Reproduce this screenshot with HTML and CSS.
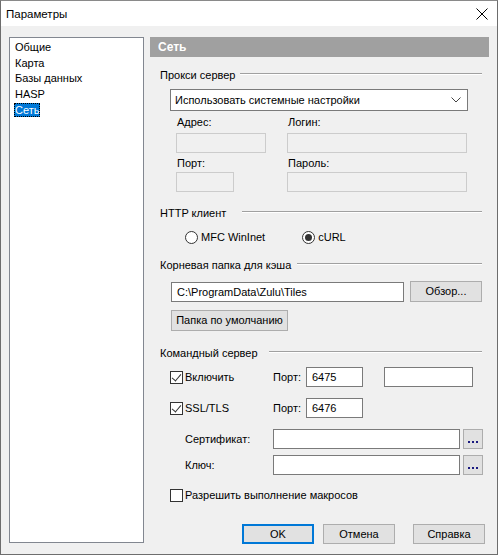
FILE: index.html
```html
<!DOCTYPE html>
<html>
<head>
<meta charset="utf-8">
<link rel="stylesheet" href="styles.css">
</head>
<body>
<div class="window">
  <div class="titlebar">
    <span class="title">Параметры</span>
    <svg class="close" width="12" height="12" viewBox="0 0 12 12"><path d="M0.5 0.5 L11.5 11.5 M11.5 0.5 L0.5 11.5" stroke="#000" stroke-width="1"/></svg>
  </div>
  <div class="body">
    <div class="listbox">
      <div class="item">Общие</div>
      <div class="item">Карта</div>
      <div class="item">Базы данных</div>
      <div class="item">HASP</div>
      <div class="item"><span class="selected">Сеть</span></div>
    </div>
    <div class="panel">
      <div class="header">Сеть</div>

      <div class="group g-proxy"><span>Прокси сервер</span><i class="line"></i></div>
      <div class="combo"><span>Использовать системные настройки</span>
        <svg width="10" height="6" viewBox="0 0 10 6"><path d="M0.5 0.5 L5 5 L9.5 0.5" fill="none" stroke="#444" stroke-width="1"/></svg>
      </div>
      <div class="fields">
        <div class="lbl">Адрес:</div><div class="lbl">Логин:</div>
        <div class="dis d1 w-addr"></div><div class="dis d1 w-wide"></div>
        <div class="lbl l2">Порт:</div><div class="lbl l2">Пароль:</div>
        <div class="dis w-port"></div><div class="dis w-wide"></div>
      </div>

      <div class="group g-http"><span>HTTP клиент</span><i class="line"></i></div>
      <div class="radios">
        <label class="radio r1"><i class="circle"></i>MFC WinInet</label>
        <label class="radio r2"><i class="circle on"></i>cURL</label>
      </div>

      <div class="group g-cache"><span>Корневая папка для кэша</span><i class="line"></i></div>
      <div class="pathrow">
        <div class="input w-path">C:\ProgramData\Zulu\Tiles</div>
        <div class="btn w-browse">Обзор...</div>
      </div>
      <div class="btn w-default">Папка по умолчанию</div>

      <div class="group g-cmd"><span>Командный сервер</span><i class="line"></i></div>
      <div class="row r-enable">
        <label class="check"><i class="box on"></i>Включить</label>
        <span class="portlbl">Порт:</span>
        <div class="input w-portv">6475</div>
        <div class="input w-extra"></div>
      </div>
      <div class="row r-ssl">
        <label class="check"><i class="box on"></i>SSL/TLS</label>
        <span class="portlbl">Порт:</span>
        <div class="input w-portv">6476</div>
      </div>
      <div class="row r-cert">
        <span class="flbl">Сертификат:</span>
        <div class="input w-file"></div>
        <div class="dots"><i></i><i></i><i></i></div>
      </div>
      <div class="row r-key">
        <span class="flbl">Ключ:</span>
        <div class="input w-file"></div>
        <div class="dots"><i></i><i></i><i></i></div>
      </div>
      <div class="row r-macro">
        <label class="check"><i class="box"></i>Разрешить выполнение макросов</label>
      </div>

      <div class="buttons">
        <div class="btn dlg default">OK</div>
        <div class="btn dlg b-cancel">Отмена</div>
        <div class="btn dlg b-help">Справка</div>
      </div>
    </div>
  </div>
</div>
</body>
</html>
```
FILE: styles.css
```css
html, body { margin: 0; padding: 0; background: #ffffff; }
body { font-family: "Liberation Sans", Arial, sans-serif; font-size: 11px; color: #000; }

.window {
  width: 498px; height: 555px; box-sizing: border-box;
  border: 1px solid #6d6d6d; border-top-color: #8a8a8a;
  background: #f0f0f0; display: flex; flex-direction: column;
}
.titlebar {
  height: 25px; background: #fff; display: flex; align-items: center;
  justify-content: space-between; padding: 0 9px 0 5px; flex: none;
}
.title { font-size: 11.5px; }
.close { display: block; }

.body { display: flex; padding: 11px 0 0 8px; flex: 1; }
.listbox {
  width: 135px; height: 506px; box-sizing: border-box; background: #fff;
  border: 1px solid #828790; padding: 2px 0 0 5px; flex: none;
}
.item { height: 15.7px; line-height: 15.7px; white-space: nowrap; }
.selected {
  background: #0078d7; color: #fff; outline: 1px dotted #000; outline-offset: -1px;
  padding: 0 1px; margin-left: -1px; display: inline-block; line-height: 14px;
}

.panel { margin-left: 6px; width: 339px; display: flex; flex-direction: column; }
.header {
  height: 20px; background: #a0a0a0; color: #fff; font-weight: bold; font-size: 12px;
  line-height: 20px; padding-left: 8px;
}

.group { display: flex; align-items: center; height: 14px; padding-left: 10px; margin-right: 7px; white-space: nowrap; }
.group .line { flex: 1; height: 0; border-top: 1px solid #a0a0a0; border-bottom: 1px solid #fff; margin-top: -3px; }
.g-proxy { margin-top: 11px; }
.g-proxy .line { margin-left: 5px; }
.g-http { margin-top: 14px; }
.g-http .line { margin-left: 16px; }
.g-cache { margin-top: 14px; }
.g-cache .line { margin-left: 6px; }
.g-cmd { margin-top: 15px; }
.g-cmd .line { margin-left: 11px; }

.combo {
  margin: 7px 0 0 20px; width: 298px; height: 22px; box-sizing: border-box;
  border: 1px solid #7a7a7a; background: #fff; display: flex; align-items: center;
  justify-content: space-between; padding: 0 6px 0 4px;
}

.fields {
  display: grid; grid-template-columns: 111px 180px; margin-left: 26px;
  grid-template-rows: 14px 24px 19px 20px; margin-top: 4px;
}
.lbl { padding-left: 1px; line-height: 14px; align-self: start; }
.dis { height: 20px; box-sizing: border-box; background: #f0f0f0; border: 1px solid #cccccc; }
.d1 { margin-top: 4px; }
.l2 { margin-top: 3px; }
.w-addr { width: 90px; }
.w-port { width: 58px; }
.w-wide { width: 180px; }

.radios { display: flex; height: 14px; margin-top: 10px; align-items: center; }
.radio { display: flex; align-items: center; white-space: nowrap; }
.radio .circle {
  width: 13px; height: 13px; box-sizing: border-box; border: 1px solid #333; border-radius: 50%;
  background: #fff; margin-right: 3px; position: relative; display: inline-block;
}
.radio .circle.on::after {
  content: ""; position: absolute; left: 2px; top: 2px; width: 7px; height: 7px; border-radius: 50%; background: #333;
}
.r1 { margin-left: 35px; }
.r2 { margin-left: 37px; }

.pathrow { display: flex; margin: 9px 0 0 21px; align-items: flex-start; }
.input {
  height: 20px; box-sizing: border-box; background: #fff; border: 1px solid #7a7a7a;
  padding-left: 5px; line-height: 18px; white-space: nowrap;
}
.w-path { width: 233px; margin-top: 1px; }
.btn {
  height: 21px; box-sizing: border-box; background: #e1e1e1; border: 1px solid #adadad;
  text-align: center; line-height: 19px; white-space: nowrap;
}
.w-browse { width: 72px; margin-left: 6px; }
.w-default { width: 117px; margin: 8px 0 0 21px; }

.row { display: flex; align-items: center; height: 20px; margin-left: 20px; }
.check { display: flex; align-items: center; white-space: nowrap; }
.box {
  width: 13px; height: 13px; box-sizing: border-box; border: 1px solid #333; background: #fff;
  margin-right: 2px; position: relative; display: inline-block;
}
.box.on::after {
  content: ""; position: absolute; left: 3px; top: 0px; width: 4px; height: 8px;
  border: solid #333; border-width: 0 1.3px 1.3px 0; transform: rotate(40deg);
}
.r-enable { margin-top: 7px; }
.r-enable .check { width: 103px; }
.r-ssl .check { width: 103px; }
.portlbl { width: 33px; }
.w-portv { width: 57px; }
.w-extra { width: 89px; margin-left: 21px; margin-top: -1px; }
.r-ssl { margin-top: 11px; }
.r-cert { margin-top: 11px; }
.r-key { margin-top: 6px; }
.flbl { width: 88px; padding-left: 15px; }
.w-file { width: 187px; }
.dots {
  width: 20px; height: 20px; box-sizing: border-box; margin-left: 3px; background: #e1e1e1;
  border: 1px solid #adadad; display: flex; justify-content: center; align-items: flex-end;
  gap: 2px; padding-bottom: 5px;
}
.dots i { width: 2px; height: 2px; background: #1a1a80; display: block; }
.r-macro { margin-top: 13px; height: 14px; }

.buttons { display: flex; margin-top: 22px; margin-left: 92px; }
.dlg { width: 72px; height: 20px; line-height: 18px; }
.default { border: 2px solid #0078d7; line-height: 16px; }
.b-cancel { margin-left: 9px; }
.b-help { margin-left: 18px; }
```
